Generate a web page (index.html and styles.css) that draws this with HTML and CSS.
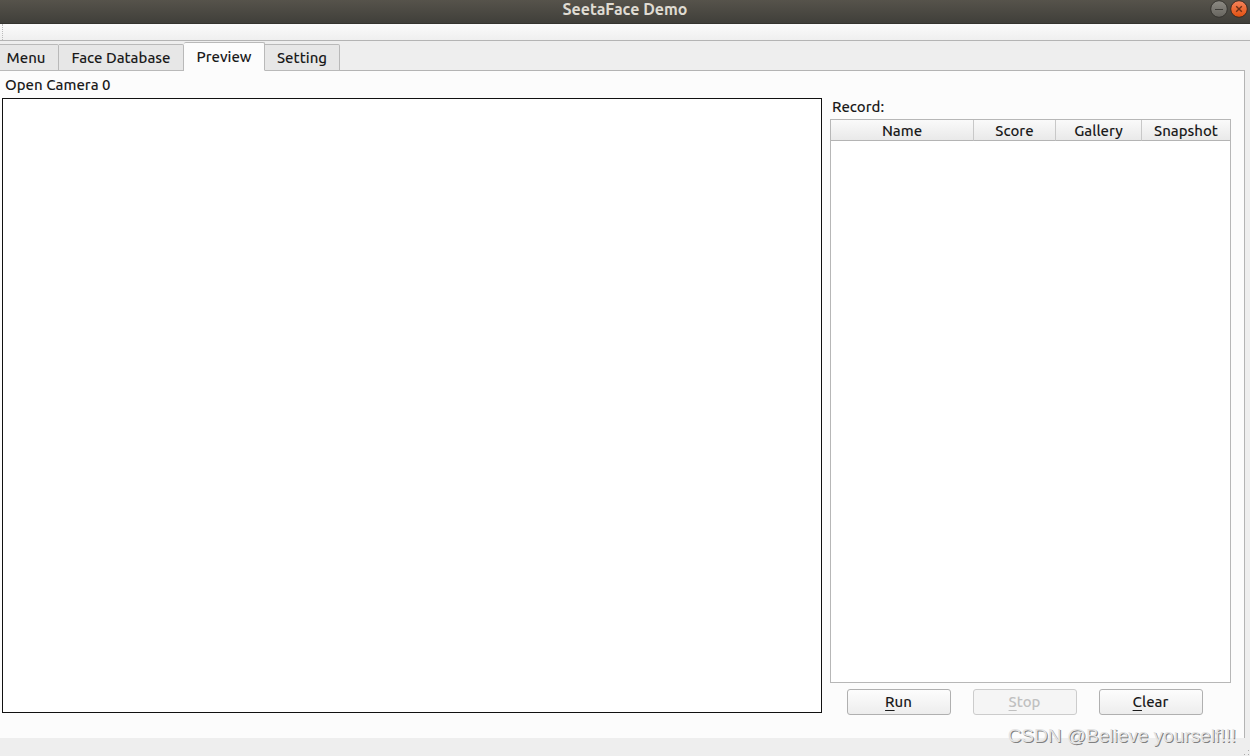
FILE: index.html
```html
<!DOCTYPE html>
<html lang="en">
<head>
<meta charset="utf-8">
<title>SeetaFace Demo</title>
<link rel="stylesheet" href="styles.css">
</head>
<body>
<div class="window">
  <header class="titlebar">
    <h1 class="title">SeetaFace Demo</h1>
    <div class="window-controls">
      <button class="control" type="button" aria-label="Minimize">
        <svg viewBox="0 0 18 18" width="18" height="18"><defs><linearGradient id="grey" x2="0" y2="1"><stop stop-color="#8d8b84"/><stop offset="1" stop-color="#66645e"/></linearGradient></defs><circle cx="9" cy="9" r="8.3" fill="url(#grey)" stroke="#35342f"/><path d="M5 9.5h8" stroke="#3f3e39" stroke-width="1"/></svg>
      </button>
      <button class="control" type="button" aria-label="Close">
        <svg viewBox="0 0 18 18" width="18" height="18"><defs><linearGradient id="orange" x2="0" y2="1"><stop stop-color="#f5845c"/><stop offset="1" stop-color="#e2500f"/></linearGradient></defs><circle cx="9" cy="9" r="8.3" fill="url(#orange)" stroke="#3b2a22"/><path d="M6.2 6.2l5.6 5.6M11.8 6.2l-5.6 5.6" stroke="#6b3018" stroke-width="1.4"/></svg>
      </button>
    </div>
  </header>
  <div class="toolbar"><span class="grip"></span></div>
  <nav class="tabs" role="tablist">
    <button class="tab tab-menu" role="tab" type="button">Menu</button>
    <button class="tab tab-database" role="tab" type="button">Face Database</button>
    <button class="tab tab-preview active" role="tab" type="button" aria-selected="true">Preview</button>
    <button class="tab tab-setting" role="tab" type="button">Setting</button>
  </nav>
  <main class="panel">
    <p class="status">Open Camera 0</p>
    <div class="content">
      <section class="view" aria-label="Camera view"></section>
      <section class="record">
        <h2 class="record-title">Record:</h2>
        <div class="record-list">
          <table class="record-table">
            <colgroup><col class="col-name"><col class="col-score"><col class="col-gallery"><col class="col-snapshot"></colgroup>
            <thead><tr><th>Name</th><th>Score</th><th>Gallery</th><th>Snapshot</th></tr></thead>
          </table>
        </div>
        <div class="actions">
          <button class="action" type="button"><span class="key">R</span>un</button>
          <button class="action" type="button" disabled><span class="key">S</span>top</button>
          <button class="action" type="button"><span class="key">C</span>lear</button>
        </div>
      </section>
    </div>
  </main>
  <footer class="statusbar">
    <svg class="size-grip" viewBox="0 0 6 6" width="6" height="6"><path d="M4 0h1v1h-1zM0 4h1v1h-1zM4 4h1v1h-1z" fill="#aaa"/></svg>
  </footer>
  <div class="watermark">CSDN @Believe yourself!!!</div>
</div>
</body>
</html>
```
FILE: styles.css
```css
* { box-sizing: border-box; }
body {
  margin: 0;
  background: #eee;
  color: #1a1a1a;
  font: 500 15px/20px "Ubuntu", "Noto Sans", sans-serif;
}
button { font: inherit; color: inherit; padding: 0; }
.window {
  position: relative;
  display: flex;
  flex-direction: column;
  height: 100vh;
  overflow: hidden;
}
.titlebar {
  display: grid;
  grid-template-columns: 1fr auto 1fr;
  height: 24px;
  background: linear-gradient(#56534b, #403f3a);
  border-bottom: 1px solid #35342f;
}
.title {
  grid-column: 2;
  margin: 0;
  color: #dfdbd2;
  font-size: 16px;
  line-height: 19px;
  font-weight: 700;
}
.window-controls { display: flex; justify-content: flex-end; gap: 2px; padding-right: 2px; }
.control { width: 18px; height: 18px; border: 0; background: none; }
.control svg { display: block; }
.toolbar {
  height: 17px;
  padding-left: 2px;
  background: linear-gradient(#fbfbfb, #efefef);
  border-bottom: 1px solid #b4b4b4;
}
.grip { display: block; width: 1px; height: 16px; border-left: 1px dotted #bbb; }
.tabs { display: flex; align-items: flex-end; height: 30px; padding-top: 1px; }
.tab {
  height: 27px;
  background: #e7e7e7;
  border: 1px solid #b9b9b9;
  border-left: 0;
  border-radius: 0 2px 0 0;
}
.tabs::after { content: ""; flex: 1; margin-right: 5px; border-bottom: 1px solid #b4b4b4; }
.tab-menu { width: 59px; padding-right: 6px; }
.tab-database { width: 125px; }
.tab-preview { width: 81px; }
.tab-setting { width: 75px; }
.tab.active {
  height: 29px;
  background: #fcfcfc;
  border-bottom-color: #fcfcfc;
  border-radius: 2px 2px 0 0;
}
.panel {
  flex: 1;
  display: flex;
  flex-direction: column;
  min-height: 0;
  margin-right: 5px;
  padding: 4px 13px 25px 2px;
  background: #fcfcfc;
  border-right: 1px solid #b4b4b4;
}
.status { margin: 0 0 3px; padding-left: 3px; }
.content { flex: 1; display: flex; gap: 8px; min-height: 0; }
.view { flex: 1; background: #fff; border: 1px solid #111; }
.record { display: flex; flex-direction: column; width: 401px; margin-bottom: -2px; }
.record-title { margin: 0 0 3px; padding-left: 2px; font-size: 15px; line-height: 18px; font-weight: 500; }
.record-list { flex: 1; background: #fff; border: 1px solid #b7b7b7; }
.record-table { width: 100%; table-layout: fixed; border-collapse: separate; border-spacing: 0; }
.record-table th {
  height: 21px;
  padding: 1px 0 0;
  line-height: 19px;
  font-weight: 500;
  background: linear-gradient(#fafafa, #e9e9e9);
  border-right: 1px solid #c8c8c8;
  border-bottom: 1px solid #b4b4b4;
}
.record-table th:last-child { border-right: 0; }
.col-name { width: 143px; }
.col-score { width: 82px; }
.col-gallery { width: 86px; }
.actions { display: flex; justify-content: center; gap: 22px; padding: 6px 12px 0 0; }
.action {
  width: 104px;
  height: 26px;
  background: linear-gradient(#fdfdfd, #ededed);
  border: 1px solid #b0b0b0;
  border-radius: 3px;
}
.action:disabled { color: #c0c0c0; background: #f5f5f5; border-color: #ccc; }
.key { text-decoration: underline; text-underline-offset: 3px; text-decoration-skip-ink: none; }
.statusbar { display: flex; justify-content: flex-end; align-items: flex-end; height: 18px; }
.size-grip { display: block; }
.watermark {
  position: absolute;
  right: 14px;
  bottom: 8px;
  color: #e4e4e4;
  font: 19px/24px "Liberation Sans", Arial, sans-serif;
  text-shadow: 1px 1px #808080;
}
```
